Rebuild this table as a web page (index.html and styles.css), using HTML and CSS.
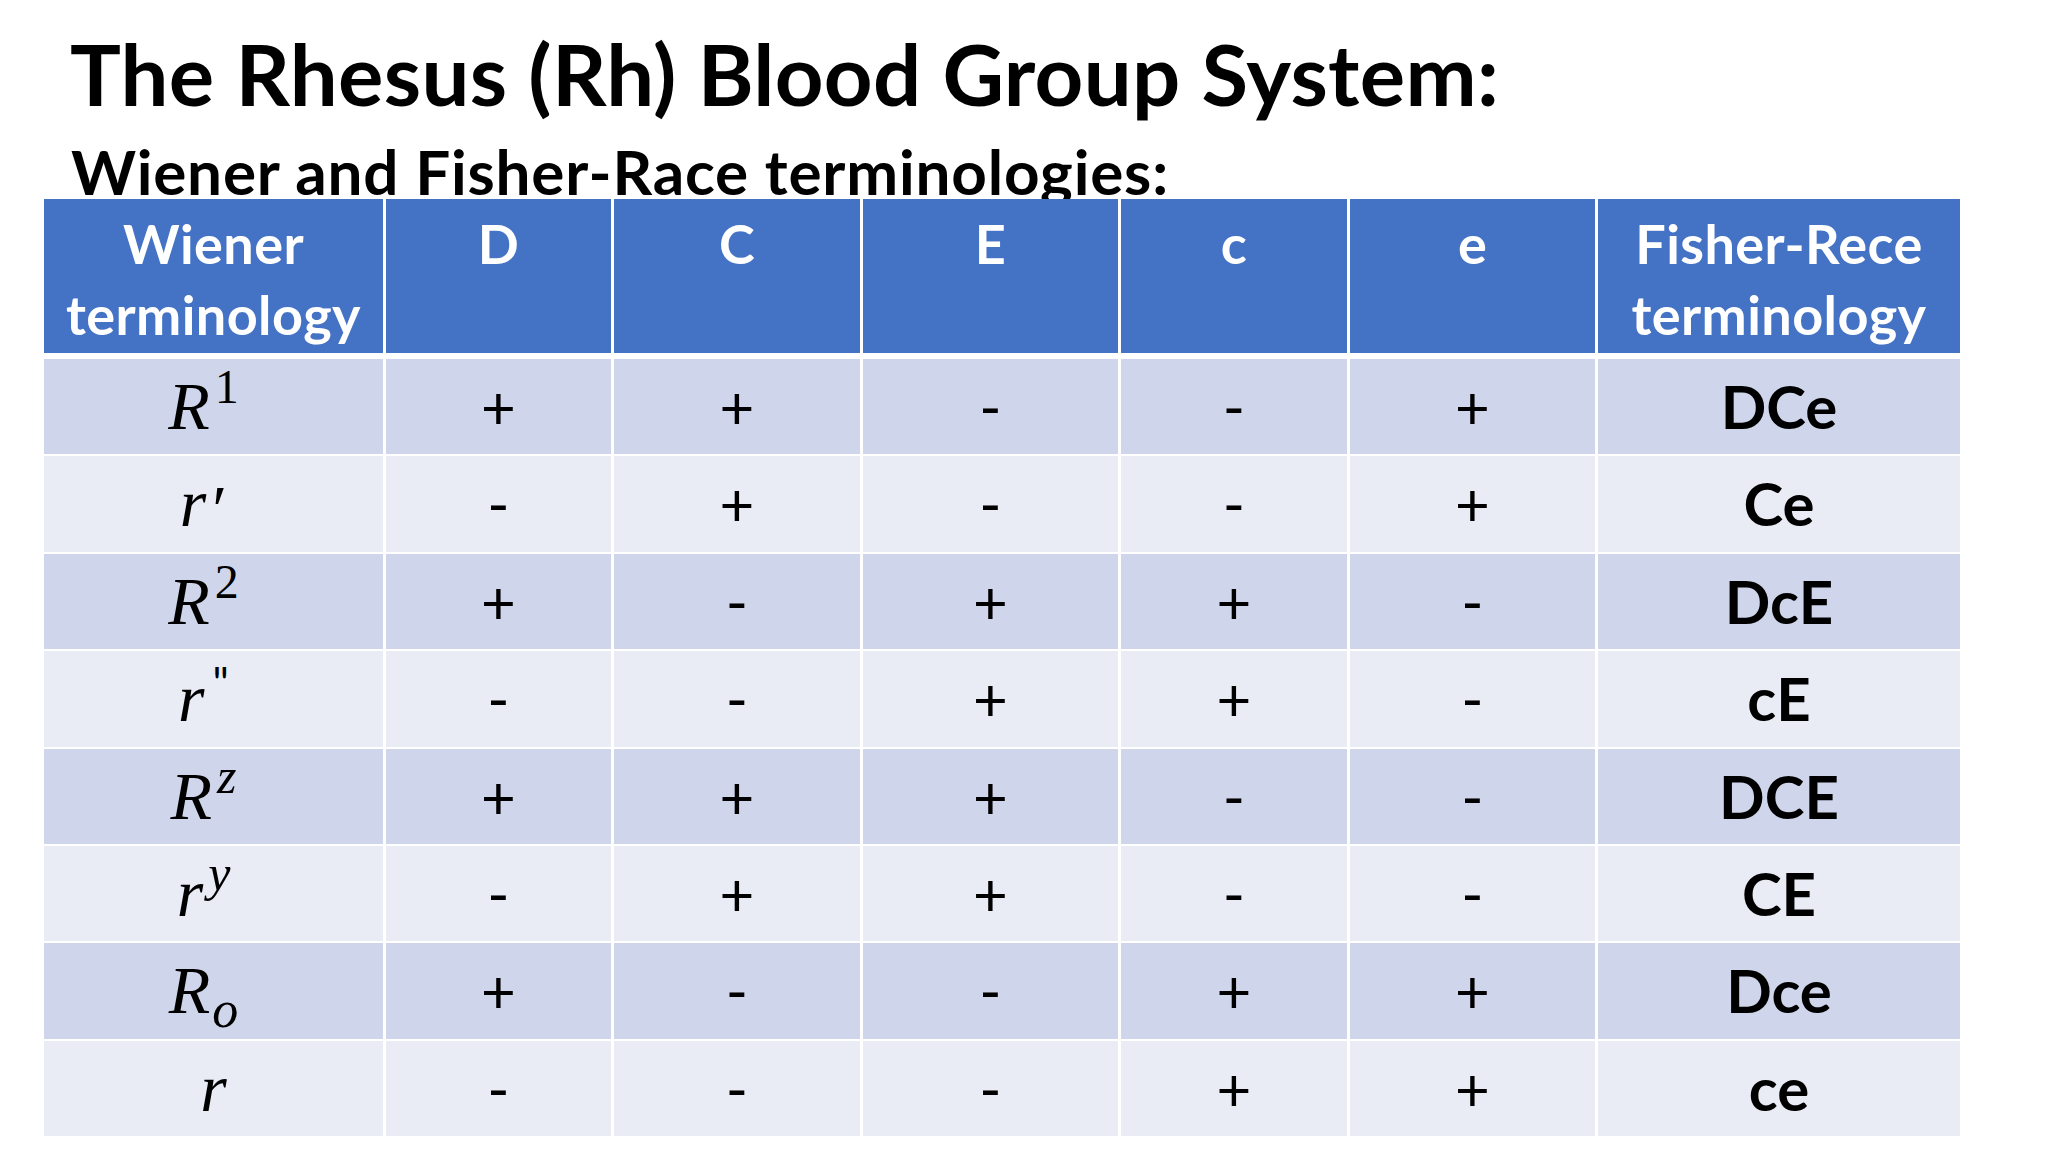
FILE: index.html
```html
<!DOCTYPE html>
<html lang="en">
<head>
<meta charset="utf-8">
<title>The Rhesus (Rh) Blood Group System</title>
<link rel="stylesheet" href="styles.css">
</head>
<body>
<div class="slide">
  <h1 class="title">The Rhesus (Rh) Blood Group System:</h1>
  <h2 class="subtitle">Wiener and Fisher-Race terminologies:</h2>
  <table class="rh">
    <colgroup>
      <col class="c-wiener">
      <col class="c-d">
      <col class="c-cc">
      <col class="c-ee">
      <col class="c-c">
      <col class="c-e">
      <col class="c-fisher">
    </colgroup>
    <thead>
      <tr class="head">
        <th>Wiener<br>terminology</th>
        <th>D</th>
        <th>C</th>
        <th>E</th>
        <th>c</th>
        <th>e</th>
        <th>Fisher-Rece<br>terminology</th>
      </tr>
    </thead>
    <tbody>
      <tr class="odd first">
        <td class="w shift"><span class="m">R</span><span class="sup num">1</span></td>
        <td>+</td><td>+</td><td>-</td><td>-</td><td>+</td>
        <td class="fr">DCe</td>
      </tr>
      <tr class="even">
        <td class="w shift"><span class="m">r</span><span class="prime">′</span></td>
        <td>-</td><td>+</td><td>-</td><td>-</td><td>+</td>
        <td class="fr">Ce</td>
      </tr>
      <tr class="odd">
        <td class="w shift"><span class="m">R</span><span class="sup num">2</span></td>
        <td>+</td><td>-</td><td>+</td><td>+</td><td>-</td>
        <td class="fr">DcE</td>
      </tr>
      <tr class="even">
        <td class="w shift"><span class="m">r</span><span class="dq">"</span></td>
        <td>-</td><td>-</td><td>+</td><td>+</td><td>-</td>
        <td class="fr">cE</td>
      </tr>
      <tr class="odd">
        <td class="w shift"><span class="m">R</span><span class="sup">z</span></td>
        <td>+</td><td>+</td><td>+</td><td>-</td><td>-</td>
        <td class="fr">DCE</td>
      </tr>
      <tr class="even">
        <td class="w shift"><span class="m">r</span><span class="sup">y</span></td>
        <td>-</td><td>+</td><td>+</td><td>-</td><td>-</td>
        <td class="fr">CE</td>
      </tr>
      <tr class="odd">
        <td class="w shift"><span class="m">R</span><span class="sub">o</span></td>
        <td>+</td><td>-</td><td>-</td><td>+</td><td>+</td>
        <td class="fr">Dce</td>
      </tr>
      <tr class="even">
        <td class="w"><span class="m">r</span></td>
        <td>-</td><td>-</td><td>-</td><td>+</td><td>+</td>
        <td class="fr">ce</td>
      </tr>
    </tbody>
  </table>
</div>
</body>
</html>
```
FILE: styles.css
```css
html, body {
  margin: 0;
  padding: 0;
  background: #ffffff;
}

body {
  width: 2048px;
  height: 1152px;
  overflow: hidden;
  font-family: Lato, "Open Sans", "Noto Sans", sans-serif;
  color: #000000;
}

.slide {
  padding-top: 23px;
}

.title {
  margin: 0 0 0 70px;
  font-size: 85px;
  line-height: 100px;
  font-weight: 700;
  letter-spacing: 0.3px;
  white-space: nowrap;
}

.subtitle {
  margin: 18px 0 -2px 71px;
  font-size: 62px;
  line-height: 60px;
  font-weight: 700;
  letter-spacing: 0.8px;
  white-space: nowrap;
}

.rh {
  position: relative;
  margin-left: 44px;
  width: 1916px;
  table-layout: fixed;
  border-collapse: separate;
  border-spacing: 0;
}

.c-wiener { width: 339px; }
.c-d { width: 228px; }
.c-cc { width: 249px; }
.c-ee { width: 258px; }
.c-c { width: 229px; }
.c-e { width: 248px; }
.c-fisher { width: 365px; }

.rh th,
.rh td {
  padding: 0;
  text-align: center;
  border-left: 3px solid #ffffff;
}

.rh th:first-child,
.rh td:first-child {
  border-left: none;
}

.head {
  height: 160px;
}

.rh th {
  vertical-align: top;
  padding-top: 9px;
  background: #4472c4;
  color: #ffffff;
  font-size: 54px;
  line-height: 71px;
  font-weight: 700;
  letter-spacing: 0.4px;
  border-bottom: 6px solid #ffffff;
}

.rh tbody tr {
  height: 97.4px;
}

.rh tbody tr.first {
  height: 95.4px;
}

.rh td {
  vertical-align: top;
  font-size: 60px;
  line-height: 95px;
  font-weight: 400;
  border-top: 2px solid #ffffff;
}

.rh tr.first td {
  border-top: none;
}

.odd td { background: #cfd5ea; }
.even td { background: #e9ebf5; }

.rh td.fr {
  font-weight: 700;
}

.rh td.w {
  font-family: "Liberation Serif", "DejaVu Serif", serif;
  font-size: 68px;
}

.rh td.w.shift {
  padding-right: 20px;
}

.m {
  font-style: italic;
}

.sup {
  font-style: italic;
  font-size: 50px;
  line-height: 0;
  vertical-align: 26px;
  margin-left: 5px;
}

.sup.num {
  font-style: normal;
  font-size: 48px;
}

.sub {
  font-style: italic;
  font-size: 52px;
  line-height: 0;
  vertical-align: -14px;
  margin-left: 2px;
}

.prime {
  font-size: 68px;
  line-height: 0;
  vertical-align: -6px;
  margin-left: 6px;
}

.dq {
  font-family: Lato, "Open Sans", sans-serif;
  font-size: 44px;
  line-height: 0;
  vertical-align: 22px;
  margin-left: 8px;
}
```
